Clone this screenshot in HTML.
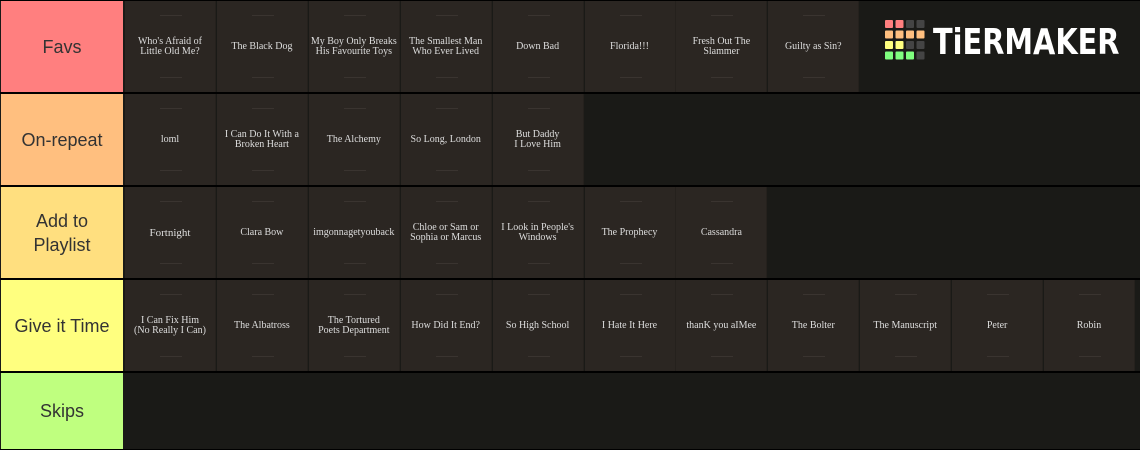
<!DOCTYPE html><html><head><style>
body{margin:0;width:1140px;height:450px;background:#000;overflow:hidden;font-family:"Liberation Sans",sans-serif}
.row{position:absolute;left:0;width:1140px;height:91px;background:#1a1a17}
.lab{position:absolute;left:1px;top:0;width:122px;height:100%;display:flex;align-items:center;justify-content:center;text-align:center;font-size:18px;color:#333;line-height:24px}
.it{position:absolute;top:0;width:91px;height:91px;background:#2b2622;border-right:1px solid #25211d;box-sizing:border-box;display:flex;align-items:center;justify-content:center;text-align:center;font-family:"Liberation Serif",serif;font-size:10px;line-height:10px;color:#ddd;padding:0;white-space:nowrap}
.it:before,.it:after{content:"";position:absolute;left:35px;width:22px;height:1px;background:#3a3430}
.it:before{top:14px}.it:after{bottom:14px}
</style></head><body>
<div class="row" style="top:1px"><div class="lab" style="background:#ff7f7f">Favs</div></div>
<div class="row" style="top:94px"><div class="lab" style="background:#ffbf7f">On-repeat</div></div>
<div class="row" style="top:187px"><div class="lab" style="background:#ffdf7f">Add to<br>Playlist</div></div>
<div class="row" style="top:280px"><div class="lab" style="background:#ffff7f">Give it Time</div></div>
<div class="row" style="top:373px;height:76px"><div class="lab" style="background:#bfff7f">Skips</div></div>
<div id="items"></div>
<div style="position:absolute;left:885px;top:20px;width:44px;height:42px">
<svg width="44" height="42"><g>
<rect x="0" y="0" width="8" height="8" rx="1" fill="#ff7f7f"/><rect x="10.5" y="0" width="8" height="8" rx="1" fill="#ff7f7f"/><rect x="21" y="0" width="8" height="8" rx="1" fill="#444"/><rect x="31.5" y="0" width="8" height="8" rx="1" fill="#444"/>
<rect x="0" y="10.5" width="8" height="8" rx="1" fill="#ffbf7f"/><rect x="10.5" y="10.5" width="8" height="8" rx="1" fill="#ffbf7f"/><rect x="21" y="10.5" width="8" height="8" rx="1" fill="#ffbf7f"/><rect x="31.5" y="10.5" width="8" height="8" rx="1" fill="#ffbf7f"/>
<rect x="0" y="21" width="8" height="8" rx="1" fill="#ffff7f"/><rect x="10.5" y="21" width="8" height="8" rx="1" fill="#ffff7f"/><rect x="21" y="21" width="8" height="8" rx="1" fill="#444"/><rect x="31.5" y="21" width="8" height="8" rx="1" fill="#444"/>
<rect x="0" y="31.5" width="8" height="8" rx="1" fill="#7fff7f"/><rect x="10.5" y="31.5" width="8" height="8" rx="1" fill="#7fff7f"/><rect x="21" y="31.5" width="8" height="8" rx="1" fill="#7fff7f"/><rect x="31.5" y="31.5" width="8" height="8" rx="1" fill="#444"/>
</g></svg></div>
<div style="position:absolute;left:933px;top:22px;font-family:'DejaVu Sans',sans-serif;font-weight:bold;font-size:36px;color:#fff;transform:scaleX(0.8);transform-origin:left">TiERMAKER</div>
<script>
const rows=[[1,["Who's Afraid of<br>Little Old Me?","The Black Dog","My Boy Only Breaks<br>His Favourite Toys","The Smallest Man<br>Who Ever Lived","Down Bad","Florida!!!","Fresh Out The<br>Slammer","Guilty as Sin?"]],
[94,["loml","I Can Do It With a<br>Broken Heart","The Alchemy","So Long, London","But Daddy<br>I Love Him"]],
[187,["Fortnight","Clara Bow","imgonnagetyouback","Chloe or Sam or<br>Sophia or Marcus","I Look in People's<br>Windows","The Prophecy","Cassandra"]],
[280,["I Can Fix Him<br>(No Really I Can)","The Albatross","The Tortured<br>Poets Department","How Did It End?","So High School","I Hate It Here","thanK you aIMee","The Bolter","The Manuscript","Peter","Robin"]]];
let h="";for(const [t,a] of rows)a.forEach((s,i)=>{h+=`<div class="it" style="left:${125+i*91.9}px;top:${t}px${s=="Fortnight"?";font-size:11px":""}">${s}</div>`});
document.getElementById("items").innerHTML=h;
</script>
</body></html>
